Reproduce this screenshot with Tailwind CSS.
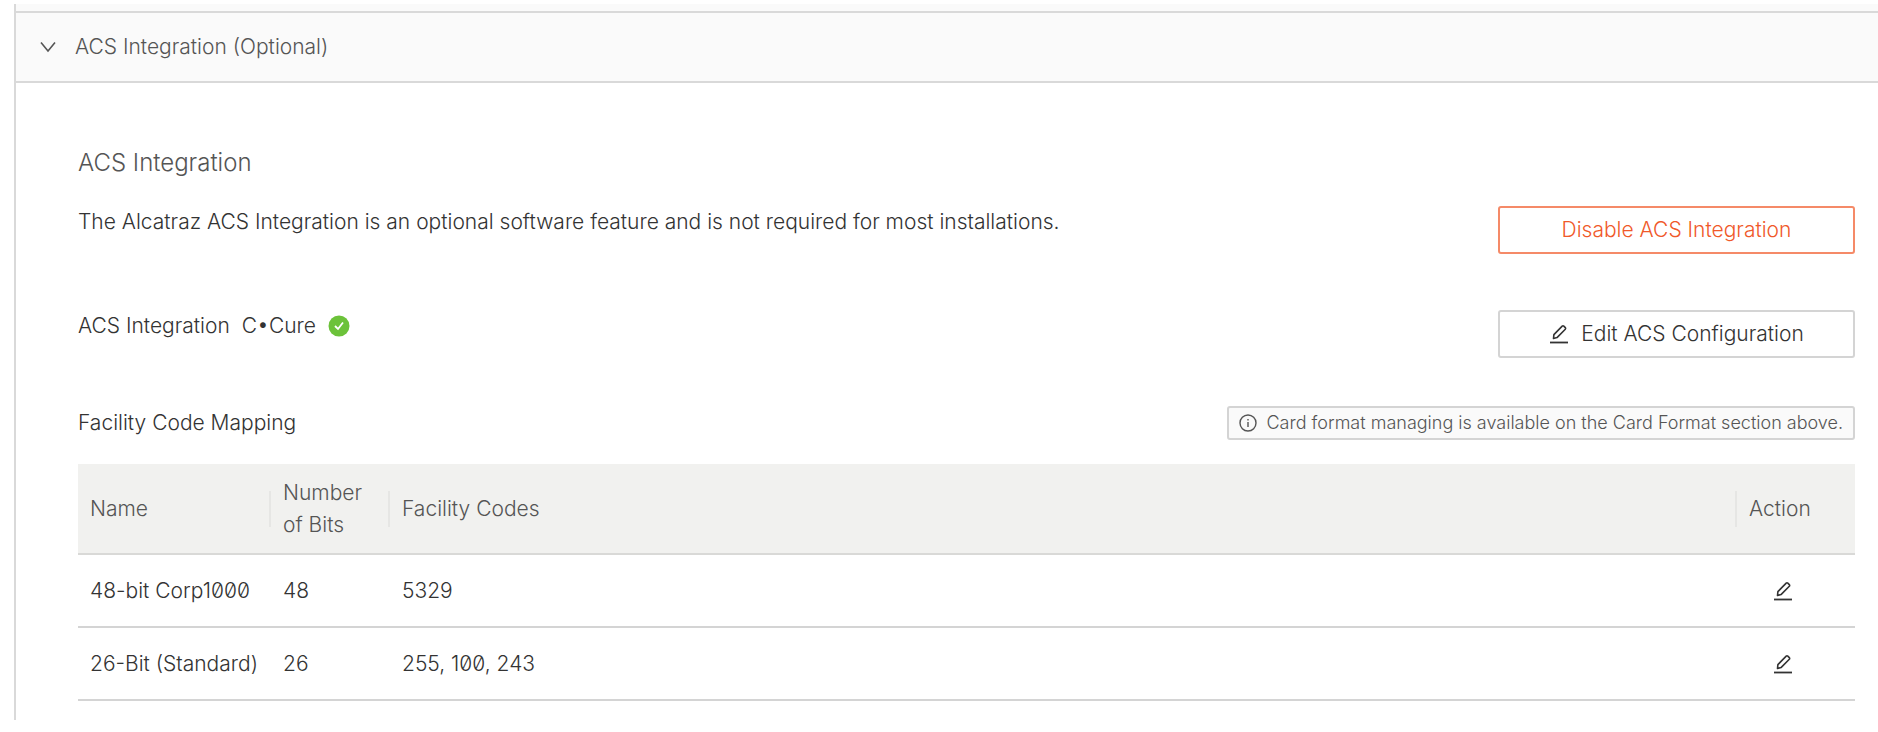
<!DOCTYPE html>
<html lang="en">
<head>
<meta charset="utf-8">
<title>ACS Integration</title>
<script src="https://cdn.jsdelivr.net/npm/@tailwindcss/browser@4"></script>
</head>
<body class="bg-white pt-1 font-['Inter','Liberation_Sans',sans-serif] text-[21px] leading-7 font-light slashed-zero text-[#333]">
<svg class="hidden">
  <symbol id="edit" viewBox="0 0 20 20"><path d="M1 18.5H19" stroke="currentColor" stroke-width="1.8"/><path d="M4.5 14.5L4.9 10.6L13.2 2.1Q14 1.4 14.8 2.1L16.3 3.6Q17 4.4 16.3 5.2L8 13.6Z" fill="none" stroke="currentColor" stroke-width="1.6" stroke-linejoin="round"/></symbol>
</svg>
<main class="ml-3.5 border-l-2 border-[#d9d9d9]">
  <div class="h-[7px] bg-[#fafafa]"></div>
  <h2 class="border-y-2 border-[#d9d9d9] bg-[#fafafa]">
    <button type="button" aria-expanded="true" class="flex h-17 w-full items-center gap-[19px] pl-6 text-left text-[#555]">
      <svg class="size-4" viewBox="0 0 16 16" fill="none" stroke="currentColor" stroke-width="1.6"><path d="M1 3.5L8 12L15 3.5"/></svg>
      ACS Integration (Optional)
    </button>
  </h2>
  <section class="pt-16 pr-[23px] pb-[19px] pl-[62px]">
    <h3 class="text-2xl text-[#555]">ACS Integration</h3>
    <div class="mt-[27px] flex items-start justify-between">
      <p class="pt-0.5">The Alcatraz ACS Integration is an optional software feature and is not required for most installations.</p>
      <button type="button" class="h-12 w-[357px] rounded-[3px] border-2 border-[#f58a68] text-[#f0592a]">Disable ACS Integration</button>
    </div>
    <div class="mt-14 flex items-start justify-between">
      <p class="flex items-center gap-3 pt-0.5"><span>ACS Integration</span><span>C•Cure</span>
        <svg class="size-[22px]" viewBox="0 0 22 22"><circle cx="11" cy="11" r="10.5" fill="#6cc23a"/><path d="M7 11L10 14L15 7.5" fill="none" stroke="#fff" stroke-width="1.8"/></svg>
      </p>
      <button type="button" class="flex h-12 w-[357px] items-center justify-center gap-3 rounded-[3px] border-2 border-[#d4d4d4]"><svg class="size-5"><use href="#edit"/></svg>Edit ACS Configuration</button>
    </div>
    <div class="mt-12 flex items-center justify-between">
      <h4>Facility Code Mapping</h4>
      <p class="flex h-[34px] items-center gap-2.5 rounded-[3px] border-2 border-[#d4d4d4] bg-[#fafafa] px-2.5 text-lg text-[#555]">
        <svg class="size-[18px]" viewBox="0 0 18 18" fill="none" stroke="currentColor" stroke-width="1.4"><circle cx="9" cy="9" r="8"/><path d="M9 8V13M9 5V6.6"/></svg>
        Card format managing is available on the Card Format section above.
      </p>
    </div>
    <table class="mt-6 w-full table-fixed text-left">
      <thead class="bg-[#f1f1ef] text-[#555]">
        <tr class="h-[90px] border-b-2 border-[#d9d9d7]">
          <th scope="col" class="w-[193px] p-0 font-light"><div class="flex h-9 items-center border-r-2 border-[#e6e6e4] pl-3">Name</div></th>
          <th scope="col" class="w-[119px] p-0 font-light"><div class="flex h-9 items-center border-r-2 border-[#e6e6e4] pl-3 leading-8">Number<br>of Bits</div></th>
          <th scope="col" class="p-0 font-light"><div class="flex h-9 items-center border-r-2 border-[#e6e6e4] pl-3">Facility Codes</div></th>
          <th scope="col" class="w-[118px] pl-3 font-light">Action</th>
        </tr>
      </thead>
      <tbody>
        <tr class="h-[73px] border-b-2 border-[#d4d4d4]">
          <td class="pl-3 whitespace-nowrap">48-bit Corp1000</td><td class="pl-3">48</td><td class="pl-3">5329</td>
          <td><button type="button" aria-label="Edit 48-bit Corp1000" class="ml-9 block"><svg class="size-5"><use href="#edit"/></svg></button></td>
        </tr>
        <tr class="h-[73px] border-b-2 border-[#d4d4d4]">
          <td class="pl-3 whitespace-nowrap">26-Bit (Standard)</td><td class="pl-3">26</td><td class="pl-3">255, 100, 243</td>
          <td><button type="button" aria-label="Edit 26-Bit (Standard)" class="ml-9 block"><svg class="size-5"><use href="#edit"/></svg></button></td>
        </tr>
      </tbody>
    </table>
  </section>
</main>
</body>
</html>
